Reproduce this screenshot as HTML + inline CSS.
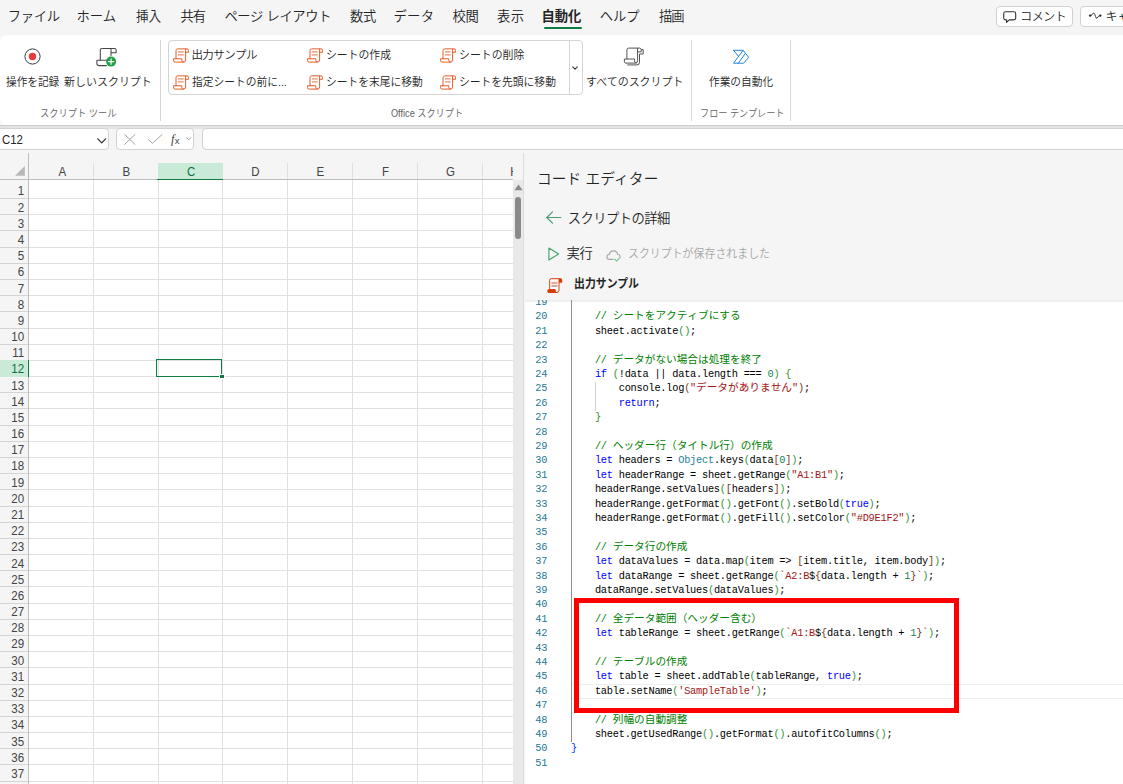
<!DOCTYPE html><html lang="ja"><head><meta charset="utf-8"><title>Excel</title><style>
*{box-sizing:border-box;margin:0;padding:0}
html,body{width:1123px;height:784px;overflow:hidden;background:#f5f5f5}
body{position:relative;font-family:"Liberation Sans","Noto Sans CJK JP",sans-serif;color:#242424}
.abs{position:absolute}
.tx{position:absolute;line-height:20px;white-space:pre;transform-origin:0 50%;font-weight:350}
#ribbon{position:absolute;left:0;top:35px;width:1123px;height:89.8px;background:#fff;border-radius:7px 0 0 7px}
.vsep{position:absolute;top:39.8px;width:1px;height:81px;background:#d6d6d6}
.btn{position:absolute;top:6px;height:20.5px;border:1px solid #d1d1d1;border-radius:4px;background:#fff}
.fb{position:absolute;top:128.2px;height:21.8px;background:#fff;border:1px solid #d2d2d2;border-radius:4px}
#grid{position:absolute;left:0;top:163px;width:513px;height:621px;background:#fff;overflow:hidden}
.ch{position:absolute;top:0;height:17px;font-size:12.8px;line-height:17.6px;transform:scaleX(.9);text-align:center;color:#444}
.rh{position:absolute;left:0;width:28px;font-size:12.3px;text-align:right;padding-right:4px;color:#444;transform:scaleX(.94);transform-origin:100% 50%}
#pane{position:absolute;left:522.9px;top:153px;width:601px;height:631px;background:#f5f5f5;border-left:1px solid #dcdcdc}
#code{position:absolute;left:524.5px;top:299.5px;width:598.5px;height:484.5px;background:#fff;overflow:hidden}
.ln{position:absolute;left:1.2px;width:21.5px;text-align:right;color:#237893;font:10.3px/14.4px "Liberation Mono",monospace;letter-spacing:-.23px;white-space:pre}
.cl{position:absolute;left:46.6px;color:#000;font:10.3px/14.4px "Liberation Mono","Noto Sans CJK JP",monospace;letter-spacing:-.23px;white-space:pre}
.cl i{font-style:normal;font-size:10.66px;line-height:14.4px;letter-spacing:0;font-kerning:none}
.c{color:#008000}.k{color:#0000ff}.s{color:#a31515}.n{color:#098658}.t{color:#267f99}.b1{color:#0431fa}.b2{color:#319331}.b3{color:#7b3814}
svg{position:absolute;overflow:visible}
</style></head><body>
<div class="tx" style="left:7.8px;top:6.7px;font-size:13.33px;color:#242424;letter-spacing:-0.367px">ファイル</div>
<div class="tx" style="left:76.5px;top:6.7px;font-size:13.33px;color:#242424;letter-spacing:-0.05px">ホーム</div>
<div class="tx" style="left:135.5px;top:6.7px;font-size:13.33px;color:#242424;transform:scaleX(0.9423)">挿入</div>
<div class="tx" style="left:180.5px;top:6.7px;font-size:13.33px;color:#242424;letter-spacing:-1.1px">共有</div>
<div class="tx" style="left:224.4px;top:6.7px;font-size:13.33px;color:#242424;letter-spacing:-0.35px">ページ レイアウト</div>
<div class="tx" style="left:350px;top:6.7px;font-size:13.33px;color:#242424;letter-spacing:-0.3px">数式</div>
<div class="tx" style="left:393.4px;top:6.7px;font-size:13.33px;color:#242424;letter-spacing:0.3px">データ</div>
<div class="tx" style="left:452.5px;top:6.7px;font-size:13.33px;color:#242424;letter-spacing:-0.3px">校閲</div>
<div class="tx" style="left:496.9px;top:6.7px;font-size:13.33px;color:#242424;letter-spacing:0.6px">表示</div>
<div class="tx" style="left:541.5px;top:7.2px;font-size:13.33px;color:#242424;font-weight:700;letter-spacing:-0.05px">自動化</div>
<div class="tx" style="left:599.8px;top:6.7px;font-size:13.33px;color:#242424;letter-spacing:-0.15px">ヘルプ</div>
<div class="tx" style="left:659px;top:6.7px;font-size:13.33px;color:#242424;letter-spacing:-1.1px">描画</div>
<div class="abs" style="left:543.5px;top:26.5px;width:38px;height:2px;background:#107c41;border-radius:1px"></div>
<div class="btn" style="left:995.6px;width:77px"></div>
<div class="btn" style="left:1079.8px;width:60px"></div>
<svg style="left:1003.2px;top:10.5px" width="14" height="13" viewBox="0 0 14 13" fill="none" stroke="#333" stroke-width="1.1" stroke-linejoin="round"><path d="M2.6.8H10.8Q12.7.8 12.7 2.7V7Q12.7 8.9 10.8 8.9H6.2L3.6 11.4V8.9H2.6Q.7 8.9.7 7V2.7Q.7.8 2.6.8Z"/></svg>
<svg style="left:1088px;top:10px" width="14" height="11" viewBox="0 0 14 11" fill="none" stroke="#2b2b2b" stroke-width=".95" stroke-linecap="round" stroke-linejoin="round"><path d="M2.1 5.6Q3.8 5.6 4.5 4Q5.3 2.5 6.2 3.4Q7 4.4 7.6 6.6Q8.2 9.1 9.2 8Q10 7 10.6 6.2Q11.3 5.6 12.3 5.6"/><circle cx="2.1" cy="5.6" r="1.2" fill="#2b2b2b" stroke="none"/><circle cx="12.3" cy="5.6" r="1.2" fill="#2b2b2b" stroke="none"/></svg>
<div class="tx" style="left:1020.2px;top:6.8px;font-size:12px;color:#242424;letter-spacing:-0.467px">コメント</div>
<div class="tx" style="left:1105.6px;top:6.8px;font-size:12px;color:#242424">キャ</div>
<div class="abs" style="left:0;top:124.6px;width:1123px;height:4px;background:linear-gradient(#cdcdcd,#cdcdcd 1px,#e4e4e4 1.2px,#e4e4e4)"></div>
<div id="ribbon"></div>
<div class="vsep" style="left:159.5px"></div>
<div class="vsep" style="left:691px"></div>
<div class="vsep" style="left:790px"></div>
<svg style="left:24.1px;top:48.4px" width="17" height="17" viewBox="0 0 17 17"><circle cx="8.5" cy="8.5" r="7.6" fill="none" stroke="#3b3b3b" stroke-width="1"/><circle cx="8.5" cy="8.5" r="3.7" fill="#ea3a3d"/></svg>
<svg style="left:96.2px;top:46.9px" width="21" height="20" viewBox="0 0 21 20" fill="none" stroke="#444" stroke-width="1.05" stroke-linejoin="round" stroke-linecap="round"><path d="M4.3 13.2V3.2Q4.3 1.4 6.1 1.4H18.4Q20.1 1.4 20.1 3.1V5.7H15M15 1.8V8.4"/><path d="M10.5 13.2H.9V16.6Q.9 18.6 2.9 18.6H10.4"/><circle cx="15.1" cy="14.6" r="5" fill="#22a046" stroke="none"/><path d="M12.4 14.6H17.8M15.1 11.9V17.3" stroke="#fff" stroke-width="1.1"/></svg>
<div class="tx" style="left:6.0px;top:71.7px;font-size:11.5px;color:#242424;transform:scaleX(0.9246)">操作を記録</div>
<div class="tx" style="left:63.7px;top:71.7px;font-size:11.5px;color:#242424;transform:scaleX(0.9544)">新しいスクリプト</div>
<div class="tx" style="left:39.68px;top:104.4px;font-size:10px;color:#616161;transform:scaleX(0.9235)">スクリプト ツール</div>
<div class="abs" style="left:167.5px;top:40px;width:415px;height:54.5px;border:1px solid #d4d4d4;border-radius:4px"></div>
<div class="abs" style="left:568.5px;top:41px;width:1px;height:52.5px;background:#d4d4d4"></div>
<svg style="left:572.2px;top:66.4px" width="6" height="4" viewBox="0 0 6 4" fill="none" stroke="#333" stroke-width="1.1" stroke-linecap="round" stroke-linejoin="round"><path d="M.7.8L3 3.1 5.3.8"/></svg>
<svg style="left:172.9px;top:47.7px" width="16" height="15" viewBox="0 0 16 14.4" fill="none" stroke="#e9541e" stroke-width="0.95" stroke-linejoin="round" stroke-linecap="round"><path d="M3 10.4V2.3Q3 .55 4.8.55H14Q15.45.55 15.45 2V4H12.6"/><path d="M12.6 1V11.6Q12.6 13.8 10.5 13.8H2.1Q.55 13.8.55 12.3V10.45H8.8V12Q8.8 13.8 10.5 13.8"/><path d="M5.3 3.6H10.3M5.3 6.6H10.3" stroke-width=".85"/></svg>
<svg style="left:172.9px;top:74.6px" width="16" height="15" viewBox="0 0 16 14.4" fill="none" stroke="#e9541e" stroke-width="0.95" stroke-linejoin="round" stroke-linecap="round"><path d="M3 10.4V2.3Q3 .55 4.8.55H14Q15.45.55 15.45 2V4H12.6"/><path d="M12.6 1V11.6Q12.6 13.8 10.5 13.8H2.1Q.55 13.8.55 12.3V10.45H8.8V12Q8.8 13.8 10.5 13.8"/><path d="M5.3 3.6H10.3M5.3 6.6H10.3" stroke-width=".85"/></svg>
<svg style="left:306.6px;top:47.7px" width="16" height="15" viewBox="0 0 16 14.4" fill="none" stroke="#e9541e" stroke-width="0.95" stroke-linejoin="round" stroke-linecap="round"><path d="M3 10.4V2.3Q3 .55 4.8.55H14Q15.45.55 15.45 2V4H12.6"/><path d="M12.6 1V11.6Q12.6 13.8 10.5 13.8H2.1Q.55 13.8.55 12.3V10.45H8.8V12Q8.8 13.8 10.5 13.8"/><path d="M5.3 3.6H10.3M5.3 6.6H10.3" stroke-width=".85"/></svg>
<svg style="left:306.6px;top:74.6px" width="16" height="15" viewBox="0 0 16 14.4" fill="none" stroke="#e9541e" stroke-width="0.95" stroke-linejoin="round" stroke-linecap="round"><path d="M3 10.4V2.3Q3 .55 4.8.55H14Q15.45.55 15.45 2V4H12.6"/><path d="M12.6 1V11.6Q12.6 13.8 10.5 13.8H2.1Q.55 13.8.55 12.3V10.45H8.8V12Q8.8 13.8 10.5 13.8"/><path d="M5.3 3.6H10.3M5.3 6.6H10.3" stroke-width=".85"/></svg>
<svg style="left:439.5px;top:47.7px" width="16" height="15" viewBox="0 0 16 14.4" fill="none" stroke="#e9541e" stroke-width="0.95" stroke-linejoin="round" stroke-linecap="round"><path d="M3 10.4V2.3Q3 .55 4.8.55H14Q15.45.55 15.45 2V4H12.6"/><path d="M12.6 1V11.6Q12.6 13.8 10.5 13.8H2.1Q.55 13.8.55 12.3V10.45H8.8V12Q8.8 13.8 10.5 13.8"/><path d="M5.3 3.6H10.3M5.3 6.6H10.3" stroke-width=".85"/></svg>
<svg style="left:439.5px;top:74.6px" width="16" height="15" viewBox="0 0 16 14.4" fill="none" stroke="#e9541e" stroke-width="0.95" stroke-linejoin="round" stroke-linecap="round"><path d="M3 10.4V2.3Q3 .55 4.8.55H14Q15.45.55 15.45 2V4H12.6"/><path d="M12.6 1V11.6Q12.6 13.8 10.5 13.8H2.1Q.55 13.8.55 12.3V10.45H8.8V12Q8.8 13.8 10.5 13.8"/><path d="M5.3 3.6H10.3M5.3 6.6H10.3" stroke-width=".85"/></svg>
<div class="tx" style="left:191.4px;top:45.2px;font-size:11.5px;color:#242424;letter-spacing:-0.52px">出力サンプル</div>
<div class="tx" style="left:192.4px;top:72.1px;font-size:11.5px;color:#242424;transform:scaleX(0.9337)">指定シートの前に...</div>
<div class="tx" style="left:325.66px;top:45.2px;font-size:11.5px;color:#242424;transform:scaleX(0.9426)">シートの作成</div>
<div class="tx" style="left:325.67px;top:72.1px;font-size:11.5px;color:#242424;transform:scaleX(0.9343)">シートを末尾に移動</div>
<div class="tx" style="left:458.95px;top:45.2px;font-size:11.5px;color:#242424;transform:scaleX(0.9471)">シートの削除</div>
<div class="tx" style="left:458.96px;top:72.1px;font-size:11.5px;color:#242424;transform:scaleX(0.9363)">シートを先頭に移動</div>
<div class="tx" style="left:390.5px;top:104.4px;font-size:10px;color:#616161;transform:scaleX(0.9156)">Office スクリプト</div>
<svg style="left:624px;top:47.4px" width="20" height="19" viewBox="0 0 20 19" fill="none" stroke="#4a4a4a" stroke-width=".95" stroke-linejoin="round" stroke-linecap="round"><path d="M2.9 11.9V2.9Q2.9 1.1 4.7 1.1H15.6Q17.2 1.1 17.2 2.7V4.9H13.6"/><path d="M13.6 1.5V13.8Q13.6 16.1 11.4 16.1H2Q.4 16.1.4 14.5V12H10.6V13.9Q10.6 16.1 12 16.1"/><path d="M17.8 2.6H19.2V7H15.5V15.3Q15.5 17.9 13 17.9H3.7"/></svg>
<div class="tx" style="left:585.65px;top:72.0px;font-size:11.5px;color:#242424;transform:scaleX(0.953)">すべてのスクリプト</div>
<svg style="left:732px;top:49px" width="18" height="16" viewBox="0 0 18 16" fill="none" stroke="#2586d8" stroke-width="1" stroke-linejoin="round" stroke-linecap="round"><path d="M1.5 1.3H11.1L16.7 8.3 11.6 14.2H1.5L11.1 1.3M1.5 1.3L6.1 6.9M6.3 14.2L13.2 4.6"/></svg>
<div class="tx" style="left:709.3px;top:72.0px;font-size:11.5px;color:#242424;transform:scaleX(0.929)">作業の自動化</div>
<div class="tx" style="left:699.59px;top:104.4px;font-size:10px;color:#616161;transform:scaleX(0.9133)">フロー テンプレート</div>
<div class="fb" style="left:-4px;width:112.7px"></div>
<div class="fb" style="left:116px;width:78px"></div>
<div class="fb" style="left:202px;width:930px"></div>
<div class="tx" style="left:2.0px;top:130.1px;font-size:12.5px;color:#242424;transform:scaleX(0.913)">C12</div>
<svg style="left:96.5px;top:137.5px" width="10" height="6" viewBox="0 0 10 6" fill="none" stroke="#2b2b2b" stroke-width="1.2" stroke-linecap="round" stroke-linejoin="round"><path d="M.8.8L4.7 4.9 8.6.8"/></svg>
<svg style="left:123.5px;top:134px" width="12" height="11" viewBox="0 0 12 11" fill="none" stroke="#a3a3a3" stroke-width="1" stroke-linecap="round"><path d="M.6.5L11 10.4M11 .5L.6 10.4"/></svg>
<svg style="left:148px;top:134px" width="15" height="10" viewBox="0 0 15 10" fill="none" stroke="#a3a3a3" stroke-width="1" stroke-linecap="round" stroke-linejoin="round"><path d="M.5 5.6L4.4 9.4 14 .6"/></svg>
<div class="abs" style="left:171px;top:130px;font:italic 12.5px/18px 'Liberation Serif',serif;color:#444">f</div>
<div class="abs" style="left:174.8px;top:135.2px;font:9.5px/12px 'Liberation Sans',sans-serif;color:#444">x</div>
<svg style="left:185.5px;top:137.3px" width="6" height="4" viewBox="0 0 6 4" fill="none" stroke="#a3a3a3" stroke-width="1" stroke-linecap="round" stroke-linejoin="round"><path d="M.6.6L2.8 2.9 5 .6"/></svg>
<div id="grid">
<div class="abs" style="left:0;top:0;width:513px;height:17px;background:#f5f5f5"></div>
<div class="abs" style="left:0;top:17px;width:28px;height:610px;background:#f5f5f5"></div>
<div class="abs" style="left:93.0px;top:0;width:1px;height:17px;background:#e0e0e0"></div>
<div class="abs" style="left:93.0px;top:17px;width:1px;height:610px;background:#e1e1e1"></div>
<div class="abs" style="left:157.5px;top:0;width:1px;height:17px;background:#e0e0e0"></div>
<div class="abs" style="left:157.5px;top:17px;width:1px;height:610px;background:#e1e1e1"></div>
<div class="abs" style="left:222.0px;top:0;width:1px;height:17px;background:#e0e0e0"></div>
<div class="abs" style="left:222.0px;top:17px;width:1px;height:610px;background:#e1e1e1"></div>
<div class="abs" style="left:286.7px;top:0;width:1px;height:17px;background:#e0e0e0"></div>
<div class="abs" style="left:286.7px;top:17px;width:1px;height:610px;background:#e1e1e1"></div>
<div class="abs" style="left:351.5px;top:0;width:1px;height:17px;background:#e0e0e0"></div>
<div class="abs" style="left:351.5px;top:17px;width:1px;height:610px;background:#e1e1e1"></div>
<div class="abs" style="left:416.5px;top:0;width:1px;height:17px;background:#e0e0e0"></div>
<div class="abs" style="left:416.5px;top:17px;width:1px;height:610px;background:#e1e1e1"></div>
<div class="abs" style="left:481.5px;top:0;width:1px;height:17px;background:#e0e0e0"></div>
<div class="abs" style="left:481.5px;top:17px;width:1px;height:610px;background:#e1e1e1"></div>
<div class="abs" style="left:0;top:35.10px;width:28px;height:1px;background:#d4d4d4"></div>
<div class="abs" style="left:29px;top:35.10px;width:484px;height:1px;background:#e1e1e1"></div>
<div class="abs" style="left:0;top:51.28px;width:28px;height:1px;background:#d4d4d4"></div>
<div class="abs" style="left:29px;top:51.28px;width:484px;height:1px;background:#e1e1e1"></div>
<div class="abs" style="left:0;top:67.46px;width:28px;height:1px;background:#d4d4d4"></div>
<div class="abs" style="left:29px;top:67.46px;width:484px;height:1px;background:#e1e1e1"></div>
<div class="abs" style="left:0;top:83.64px;width:28px;height:1px;background:#d4d4d4"></div>
<div class="abs" style="left:29px;top:83.64px;width:484px;height:1px;background:#e1e1e1"></div>
<div class="abs" style="left:0;top:99.82px;width:28px;height:1px;background:#d4d4d4"></div>
<div class="abs" style="left:29px;top:99.82px;width:484px;height:1px;background:#e1e1e1"></div>
<div class="abs" style="left:0;top:116.00px;width:28px;height:1px;background:#d4d4d4"></div>
<div class="abs" style="left:29px;top:116.00px;width:484px;height:1px;background:#e1e1e1"></div>
<div class="abs" style="left:0;top:132.18px;width:28px;height:1px;background:#d4d4d4"></div>
<div class="abs" style="left:29px;top:132.18px;width:484px;height:1px;background:#e1e1e1"></div>
<div class="abs" style="left:0;top:148.36px;width:28px;height:1px;background:#d4d4d4"></div>
<div class="abs" style="left:29px;top:148.36px;width:484px;height:1px;background:#e1e1e1"></div>
<div class="abs" style="left:0;top:164.54px;width:28px;height:1px;background:#d4d4d4"></div>
<div class="abs" style="left:29px;top:164.54px;width:484px;height:1px;background:#e1e1e1"></div>
<div class="abs" style="left:0;top:180.72px;width:28px;height:1px;background:#d4d4d4"></div>
<div class="abs" style="left:29px;top:180.72px;width:484px;height:1px;background:#e1e1e1"></div>
<div class="abs" style="left:0;top:196.90px;width:28px;height:1px;background:#d4d4d4"></div>
<div class="abs" style="left:29px;top:196.90px;width:484px;height:1px;background:#e1e1e1"></div>
<div class="abs" style="left:0;top:213.08px;width:28px;height:1px;background:#d4d4d4"></div>
<div class="abs" style="left:29px;top:213.08px;width:484px;height:1px;background:#e1e1e1"></div>
<div class="abs" style="left:0;top:229.26px;width:28px;height:1px;background:#d4d4d4"></div>
<div class="abs" style="left:29px;top:229.26px;width:484px;height:1px;background:#e1e1e1"></div>
<div class="abs" style="left:0;top:245.44px;width:28px;height:1px;background:#d4d4d4"></div>
<div class="abs" style="left:29px;top:245.44px;width:484px;height:1px;background:#e1e1e1"></div>
<div class="abs" style="left:0;top:261.62px;width:28px;height:1px;background:#d4d4d4"></div>
<div class="abs" style="left:29px;top:261.62px;width:484px;height:1px;background:#e1e1e1"></div>
<div class="abs" style="left:0;top:277.80px;width:28px;height:1px;background:#d4d4d4"></div>
<div class="abs" style="left:29px;top:277.80px;width:484px;height:1px;background:#e1e1e1"></div>
<div class="abs" style="left:0;top:293.98px;width:28px;height:1px;background:#d4d4d4"></div>
<div class="abs" style="left:29px;top:293.98px;width:484px;height:1px;background:#e1e1e1"></div>
<div class="abs" style="left:0;top:310.16px;width:28px;height:1px;background:#d4d4d4"></div>
<div class="abs" style="left:29px;top:310.16px;width:484px;height:1px;background:#e1e1e1"></div>
<div class="abs" style="left:0;top:326.34px;width:28px;height:1px;background:#d4d4d4"></div>
<div class="abs" style="left:29px;top:326.34px;width:484px;height:1px;background:#e1e1e1"></div>
<div class="abs" style="left:0;top:342.52px;width:28px;height:1px;background:#d4d4d4"></div>
<div class="abs" style="left:29px;top:342.52px;width:484px;height:1px;background:#e1e1e1"></div>
<div class="abs" style="left:0;top:358.70px;width:28px;height:1px;background:#d4d4d4"></div>
<div class="abs" style="left:29px;top:358.70px;width:484px;height:1px;background:#e1e1e1"></div>
<div class="abs" style="left:0;top:374.88px;width:28px;height:1px;background:#d4d4d4"></div>
<div class="abs" style="left:29px;top:374.88px;width:484px;height:1px;background:#e1e1e1"></div>
<div class="abs" style="left:0;top:391.06px;width:28px;height:1px;background:#d4d4d4"></div>
<div class="abs" style="left:29px;top:391.06px;width:484px;height:1px;background:#e1e1e1"></div>
<div class="abs" style="left:0;top:407.24px;width:28px;height:1px;background:#d4d4d4"></div>
<div class="abs" style="left:29px;top:407.24px;width:484px;height:1px;background:#e1e1e1"></div>
<div class="abs" style="left:0;top:423.42px;width:28px;height:1px;background:#d4d4d4"></div>
<div class="abs" style="left:29px;top:423.42px;width:484px;height:1px;background:#e1e1e1"></div>
<div class="abs" style="left:0;top:439.60px;width:28px;height:1px;background:#d4d4d4"></div>
<div class="abs" style="left:29px;top:439.60px;width:484px;height:1px;background:#e1e1e1"></div>
<div class="abs" style="left:0;top:455.78px;width:28px;height:1px;background:#d4d4d4"></div>
<div class="abs" style="left:29px;top:455.78px;width:484px;height:1px;background:#e1e1e1"></div>
<div class="abs" style="left:0;top:471.96px;width:28px;height:1px;background:#d4d4d4"></div>
<div class="abs" style="left:29px;top:471.96px;width:484px;height:1px;background:#e1e1e1"></div>
<div class="abs" style="left:0;top:488.14px;width:28px;height:1px;background:#d4d4d4"></div>
<div class="abs" style="left:29px;top:488.14px;width:484px;height:1px;background:#e1e1e1"></div>
<div class="abs" style="left:0;top:504.32px;width:28px;height:1px;background:#d4d4d4"></div>
<div class="abs" style="left:29px;top:504.32px;width:484px;height:1px;background:#e1e1e1"></div>
<div class="abs" style="left:0;top:520.50px;width:28px;height:1px;background:#d4d4d4"></div>
<div class="abs" style="left:29px;top:520.50px;width:484px;height:1px;background:#e1e1e1"></div>
<div class="abs" style="left:0;top:536.68px;width:28px;height:1px;background:#d4d4d4"></div>
<div class="abs" style="left:29px;top:536.68px;width:484px;height:1px;background:#e1e1e1"></div>
<div class="abs" style="left:0;top:552.86px;width:28px;height:1px;background:#d4d4d4"></div>
<div class="abs" style="left:29px;top:552.86px;width:484px;height:1px;background:#e1e1e1"></div>
<div class="abs" style="left:0;top:569.04px;width:28px;height:1px;background:#d4d4d4"></div>
<div class="abs" style="left:29px;top:569.04px;width:484px;height:1px;background:#e1e1e1"></div>
<div class="abs" style="left:0;top:585.22px;width:28px;height:1px;background:#d4d4d4"></div>
<div class="abs" style="left:29px;top:585.22px;width:484px;height:1px;background:#e1e1e1"></div>
<div class="abs" style="left:0;top:601.40px;width:28px;height:1px;background:#d4d4d4"></div>
<div class="abs" style="left:29px;top:601.40px;width:484px;height:1px;background:#e1e1e1"></div>
<div class="abs" style="left:0;top:617.58px;width:28px;height:1px;background:#d4d4d4"></div>
<div class="abs" style="left:29px;top:617.58px;width:484px;height:1px;background:#e1e1e1"></div>
<div class="abs" style="left:0;top:633.76px;width:28px;height:1px;background:#d4d4d4"></div>
<div class="abs" style="left:29px;top:633.76px;width:484px;height:1px;background:#e1e1e1"></div>
<div class="abs" style="left:0;top:649.94px;width:28px;height:1px;background:#d4d4d4"></div>
<div class="abs" style="left:29px;top:649.94px;width:484px;height:1px;background:#e1e1e1"></div>
<div class="abs" style="left:158px;top:0;width:65px;height:16px;background:#caead8"></div>
<div class="abs" style="left:0;top:197.40px;width:28px;height:16.18px;background:#caead8"></div>
<div class="ch" style="left:29.6px;width:64.5px;color:#444">A</div>
<div class="ch" style="left:94.1px;width:64.5px;color:#444">B</div>
<div class="ch" style="left:158.6px;width:64.5px;color:#0e703c">C</div>
<div class="ch" style="left:223.1px;width:64.70000000000002px;color:#444">D</div>
<div class="ch" style="left:287.8px;width:64.80000000000001px;color:#444">E</div>
<div class="ch" style="left:352.6px;width:65.0px;color:#444">F</div>
<div class="ch" style="left:417.6px;width:65.0px;color:#444">G</div>
<div class="ch" style="left:482.40000000000003px;width:64.99999999999994px;color:#444">H</div>
<div class="rh" style="top:18.72px;height:16.18px;line-height:19.6px;color:#444">1</div>
<div class="rh" style="top:35.60px;height:16.18px;line-height:19.6px;color:#444">2</div>
<div class="rh" style="top:51.78px;height:16.18px;line-height:19.6px;color:#444">3</div>
<div class="rh" style="top:67.96px;height:16.18px;line-height:19.6px;color:#444">4</div>
<div class="rh" style="top:84.14px;height:16.18px;line-height:19.6px;color:#444">5</div>
<div class="rh" style="top:100.32px;height:16.18px;line-height:19.6px;color:#444">6</div>
<div class="rh" style="top:116.50px;height:16.18px;line-height:19.6px;color:#444">7</div>
<div class="rh" style="top:132.68px;height:16.18px;line-height:19.6px;color:#444">8</div>
<div class="rh" style="top:148.86px;height:16.18px;line-height:19.6px;color:#444">9</div>
<div class="rh" style="top:165.04px;height:16.18px;line-height:19.6px;color:#444">10</div>
<div class="rh" style="top:181.22px;height:16.18px;line-height:19.6px;color:#444">11</div>
<div class="rh" style="top:197.40px;height:16.18px;line-height:19.6px;color:#0e703c">12</div>
<div class="rh" style="top:213.58px;height:16.18px;line-height:19.6px;color:#444">13</div>
<div class="rh" style="top:229.76px;height:16.18px;line-height:19.6px;color:#444">14</div>
<div class="rh" style="top:245.94px;height:16.18px;line-height:19.6px;color:#444">15</div>
<div class="rh" style="top:262.12px;height:16.18px;line-height:19.6px;color:#444">16</div>
<div class="rh" style="top:278.30px;height:16.18px;line-height:19.6px;color:#444">17</div>
<div class="rh" style="top:294.48px;height:16.18px;line-height:19.6px;color:#444">18</div>
<div class="rh" style="top:310.66px;height:16.18px;line-height:19.6px;color:#444">19</div>
<div class="rh" style="top:326.84px;height:16.18px;line-height:19.6px;color:#444">20</div>
<div class="rh" style="top:343.02px;height:16.18px;line-height:19.6px;color:#444">21</div>
<div class="rh" style="top:359.20px;height:16.18px;line-height:19.6px;color:#444">22</div>
<div class="rh" style="top:375.38px;height:16.18px;line-height:19.6px;color:#444">23</div>
<div class="rh" style="top:391.56px;height:16.18px;line-height:19.6px;color:#444">24</div>
<div class="rh" style="top:407.74px;height:16.18px;line-height:19.6px;color:#444">25</div>
<div class="rh" style="top:423.92px;height:16.18px;line-height:19.6px;color:#444">26</div>
<div class="rh" style="top:440.10px;height:16.18px;line-height:19.6px;color:#444">27</div>
<div class="rh" style="top:456.28px;height:16.18px;line-height:19.6px;color:#444">28</div>
<div class="rh" style="top:472.46px;height:16.18px;line-height:19.6px;color:#444">29</div>
<div class="rh" style="top:488.64px;height:16.18px;line-height:19.6px;color:#444">30</div>
<div class="rh" style="top:504.82px;height:16.18px;line-height:19.6px;color:#444">31</div>
<div class="rh" style="top:521.00px;height:16.18px;line-height:19.6px;color:#444">32</div>
<div class="rh" style="top:537.18px;height:16.18px;line-height:19.6px;color:#444">33</div>
<div class="rh" style="top:553.36px;height:16.18px;line-height:19.6px;color:#444">34</div>
<div class="rh" style="top:569.54px;height:16.18px;line-height:19.6px;color:#444">35</div>
<div class="rh" style="top:585.72px;height:16.18px;line-height:19.6px;color:#444">36</div>
<div class="rh" style="top:601.90px;height:16.18px;line-height:19.6px;color:#444">37</div>
<div class="rh" style="top:618.08px;height:16.18px;line-height:19.6px;color:#444">38</div>
<div class="abs" style="left:0;top:15.7px;width:513px;height:1.3px;background:#bdbdbd"></div>
<div class="abs" style="left:27.9px;top:0;width:1.3px;height:627px;background:#bdbdbd"></div>
<div class="abs" style="left:157px;top:15.7px;width:66px;height:1.4px;background:#107c41"></div>
<div class="abs" style="left:27.8px;top:196.60px;width:1.5px;height:16.98px;background:#107c41"></div>
<svg style="left:15.2px;top:3.3px" width="10" height="10"><path d="M9.8 0V9.7H0Z" fill="#b8b8b8"/></svg>
<div class="abs" style="left:155.8px;top:195.8px;width:66.4px;height:18.3px;border:1.1px solid #107c41"></div>
<div class="abs" style="left:219px;top:211.2px;width:6px;height:5px;background:#fff"></div>
<div class="abs" style="left:220px;top:212.1px;width:4px;height:3.1px;background:#107c41"></div>
</div>
<div class="abs" style="left:513.3px;top:180px;width:10px;height:604px;background:#e9e9e9"></div>
<svg style="left:513.5px;top:184.2px" width="10" height="7"><path d="M4.5 .5L8.7 6.3H.3Z" fill="#8a8a8a"/></svg>
<div class="abs" style="left:515px;top:196.8px;width:5.8px;height:42px;border-radius:3px;background:#8a8a8a"></div>
<div class="abs" style="left:27.9px;top:153px;width:1.3px;height:10px;background:#bdbdbd"></div>
<div id="pane"></div>
<div class="tx" style="left:536.9px;top:168.7px;font-size:14.67px;color:#242424;letter-spacing:0.138px">コード エディター</div>
<div class="tx" style="left:567.7px;top:208.6px;font-size:13.33px;color:#242424;letter-spacing:-0.571px">スクリプトの詳細</div>
<div class="tx" style="left:566.4px;top:244.0px;font-size:13.33px;color:#242424;letter-spacing:-0.1px">実行</div>
<div class="tx" style="left:627.59px;top:244.0px;font-size:12px;color:#a6a6a6;transform:scaleX(0.9104)">スクリプトが保存されました</div>
<div class="tx" style="left:574.29px;top:274.3px;font-size:12px;color:#242424;font-weight:700;transform:scaleX(0.907)">出力サンプル</div>
<svg style="left:545.7px;top:211.4px" width="16" height="13" viewBox="0 0 16 13" fill="none" stroke="#4d9a73" stroke-width="1.2" stroke-linecap="round" stroke-linejoin="round"><path d="M6.5.8L.8 6.5 6.5 12.2M1 6.5H14.8"/></svg>
<svg style="left:547.9px;top:247.1px" width="12" height="14" viewBox="0 0 12 14" fill="none" stroke="#3fa266" stroke-width="1.1" stroke-linejoin="round"><path d="M.9 1V13L10.6 7Z"/></svg>
<svg style="left:606.3px;top:249.5px" width="15" height="12" viewBox="0 0 15 12" fill="none" stroke-width="1.1" stroke-linecap="round" stroke-linejoin="round"><path d="M7 9.4H3.6Q.9 9.4.9 6.9Q.9 4.6 3.3 4.4Q3.9.9 7.5.9Q10.9.9 11.7 4.3Q13.9 4.6 14 6.6" stroke="#a5a5a5"/><path d="M8.6 9.2L10.5 11.1 14 7.6" stroke="#74c493"/></svg>
<svg style="left:547px;top:277.5px" width="16" height="16" viewBox="0 0 16 16"><path d="M2.7 11.6V2.2Q2.7.7 4.2.7H12V12.3Q12 14.4 10 14.4H8V11.6Z" fill="#fff" stroke="#d8400c" stroke-width="1" stroke-linejoin="round"/><path d="M12 .3H13.6Q15.2.3 15.2 1.9V4.8H12Z" fill="#d83b01"/><rect x=".4" y="11.3" width="8.2" height="3.6" rx="1.3" fill="#d83b01"/><path d="M8 14.4H10.2" stroke="#d83b01" stroke-width="1"/><rect x="4.4" y="3.8" width="6.1" height="2.3" fill="#eea88e"/><path d="M4.4 8H10.5" stroke="#a33a1b" stroke-width=".9"/></svg>
<div id="code">
<div class="abs" style="left:0;top:0;width:600px;height:3px;background:linear-gradient(#e9e9e9,#fff)"></div>
<div class="abs" style="left:46.5px;top:384.80px;width:552px;height:14.4px;border-top:1.5px solid #eee;border-bottom:1.5px solid #eee"></div>
<div class="abs" style="left:46.6px;top:0;width:1px;height:442.60px;background:#8f8f8f"></div>
<div class="abs" style="left:70.4px;top:82.60px;width:1px;height:28.8px;background:#d3d3d3"></div>
<div class="ln" style="top:-4.60px">19</div>
<div class="ln" style="top:9.80px">20</div>
<div class="cl" style="top:9.90px">    <span class="c">// <i>シートをアクティブにする</i></span></div>
<div class="ln" style="top:24.20px">21</div>
<div class="cl" style="top:24.30px">    sheet.activate<span class="b2">()</span>;</div>
<div class="ln" style="top:38.60px">22</div>
<div class="ln" style="top:53.00px">23</div>
<div class="cl" style="top:53.10px">    <span class="c">// <i>データがない場合は処理を終了</i></span></div>
<div class="ln" style="top:67.40px">24</div>
<div class="cl" style="top:67.50px">    <span class="k">if</span> <span class="b2">(</span>!data || data.length === <span class="n">0</span><span class="b2">)</span> <span class="b2">{</span></div>
<div class="ln" style="top:81.80px">25</div>
<div class="cl" style="top:81.90px">        console.log<span class="b3">(</span><span class="s">"<i>データがありません</i>"</span><span class="b3">)</span>;</div>
<div class="ln" style="top:96.20px">26</div>
<div class="cl" style="top:96.30px">        <span class="k">return</span>;</div>
<div class="ln" style="top:110.60px">27</div>
<div class="cl" style="top:110.70px">    <span class="b2">}</span></div>
<div class="ln" style="top:125.00px">28</div>
<div class="ln" style="top:139.40px">29</div>
<div class="cl" style="top:139.50px">    <span class="c">// <i>ヘッダー行（タイトル行）の作成</i></span></div>
<div class="ln" style="top:153.80px">30</div>
<div class="cl" style="top:153.90px">    <span class="k">let</span> headers = <span class="t">Object</span>.keys<span class="b2">(</span>data<span class="b3">[</span><span class="n">0</span><span class="b3">]</span><span class="b2">)</span>;</div>
<div class="ln" style="top:168.20px">31</div>
<div class="cl" style="top:168.30px">    <span class="k">let</span> headerRange = sheet.getRange<span class="b2">(</span><span class="s">"A1:B1"</span><span class="b2">)</span>;</div>
<div class="ln" style="top:182.60px">32</div>
<div class="cl" style="top:182.70px">    headerRange.setValues<span class="b2">(</span><span class="b3">[</span>headers<span class="b3">]</span><span class="b2">)</span>;</div>
<div class="ln" style="top:197.00px">33</div>
<div class="cl" style="top:197.10px">    headerRange.getFormat<span class="b2">()</span>.getFont<span class="b2">()</span>.setBold<span class="b2">(</span><span class="k">true</span><span class="b2">)</span>;</div>
<div class="ln" style="top:211.40px">34</div>
<div class="cl" style="top:211.50px">    headerRange.getFormat<span class="b2">()</span>.getFill<span class="b2">()</span>.setColor<span class="b2">(</span><span class="s">"#D9E1F2"</span><span class="b2">)</span>;</div>
<div class="ln" style="top:225.80px">35</div>
<div class="ln" style="top:240.20px">36</div>
<div class="cl" style="top:240.30px">    <span class="c">// <i>データ行の作成</i></span></div>
<div class="ln" style="top:254.60px">37</div>
<div class="cl" style="top:254.70px">    <span class="k">let</span> dataValues = data.map<span class="b2">(</span>item => <span class="b3">[</span>item.title, item.body<span class="b3">]</span><span class="b2">)</span>;</div>
<div class="ln" style="top:269.00px">38</div>
<div class="cl" style="top:269.10px">    <span class="k">let</span> dataRange = sheet.getRange<span class="b2">(</span><span class="s">`A2:B</span>$<span class="b3">{</span>data.length + <span class="n">1</span><span class="b3">}</span><span class="s">`</span><span class="b2">)</span>;</div>
<div class="ln" style="top:283.40px">39</div>
<div class="cl" style="top:283.50px">    dataRange.setValues<span class="b2">(</span>dataValues<span class="b2">)</span>;</div>
<div class="ln" style="top:297.80px">40</div>
<div class="ln" style="top:312.20px">41</div>
<div class="cl" style="top:312.30px">    <span class="c">// <i>全データ範囲（ヘッダー含む）</i></span></div>
<div class="ln" style="top:326.60px">42</div>
<div class="cl" style="top:326.70px">    <span class="k">let</span> tableRange = sheet.getRange<span class="b2">(</span><span class="s">`A1:B</span>$<span class="b3">{</span>data.length + <span class="n">1</span><span class="b3">}</span><span class="s">`</span><span class="b2">)</span>;</div>
<div class="ln" style="top:341.00px">43</div>
<div class="ln" style="top:355.40px">44</div>
<div class="cl" style="top:355.50px">    <span class="c">// <i>テーブルの作成</i></span></div>
<div class="ln" style="top:369.80px">45</div>
<div class="cl" style="top:369.90px">    <span class="k">let</span> table = sheet.addTable<span class="b2">(</span>tableRange, <span class="k">true</span><span class="b2">)</span>;</div>
<div class="ln" style="top:384.20px">46</div>
<div class="cl" style="top:384.30px">    table.setName<span class="b2">(</span><span class="s">'SampleTable'</span><span class="b2">)</span>;</div>
<div class="ln" style="top:398.60px">47</div>
<div class="ln" style="top:413.00px">48</div>
<div class="cl" style="top:413.10px">    <span class="c">// <i>列幅の自動調整</i></span></div>
<div class="ln" style="top:427.40px">49</div>
<div class="cl" style="top:427.50px">    sheet.getUsedRange<span class="b2">()</span>.getFormat<span class="b2">()</span>.autofitColumns<span class="b2">()</span>;</div>
<div class="ln" style="top:441.80px">50</div>
<div class="cl" style="top:441.90px"><span class="b1">}</span></div>
<div class="ln" style="top:456.20px">51</div>
</div>
<div class="abs" style="left:574px;top:598px;width:385px;height:115px;border:5px solid #ff0000"></div>
</body></html>
